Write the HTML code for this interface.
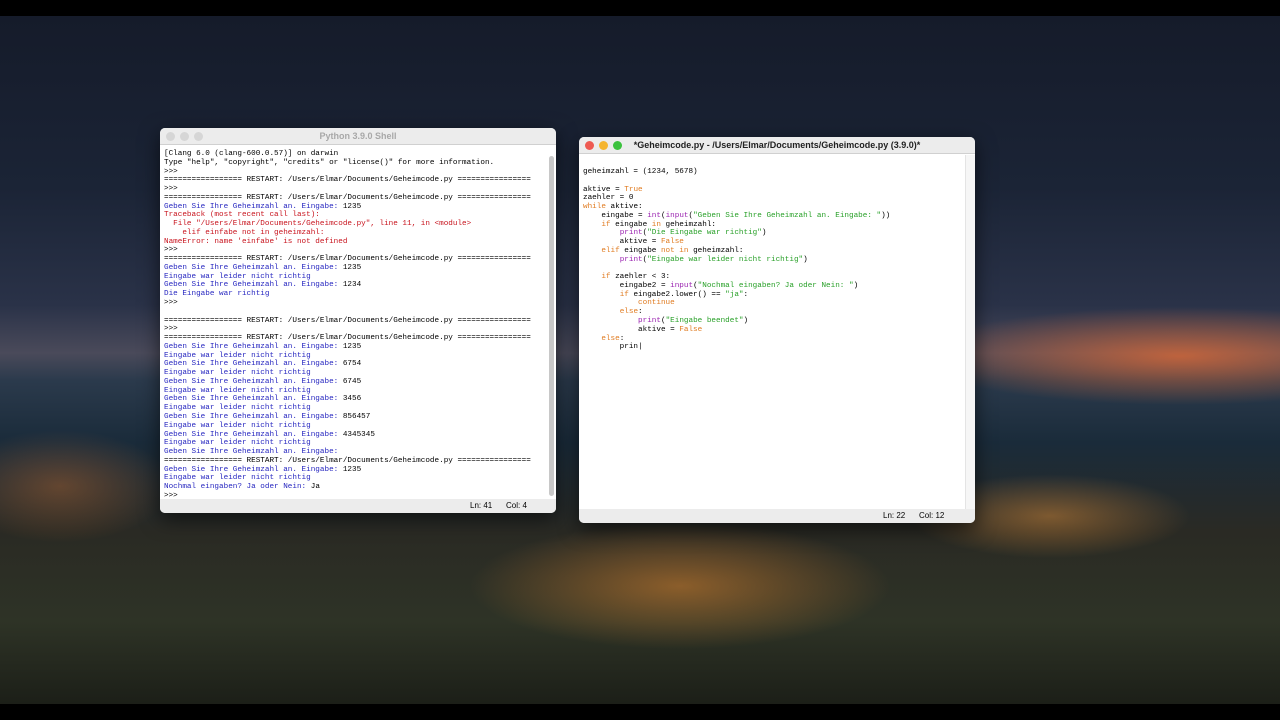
<!DOCTYPE html>
<html><head><meta charset="utf-8"><style>
*{margin:0;padding:0;box-sizing:border-box}
body{width:1280px;height:720px;overflow:hidden;position:relative;background:#000;font-family:"Liberation Sans",sans-serif}
.bg{position:absolute;left:0;top:16px;width:1280px;height:688px;
background:
radial-gradient(ellipse 380px 70px at 1180px 340px,rgba(240,110,50,.7),transparent 70%),
radial-gradient(ellipse 300px 90px at 680px 570px,rgba(255,150,50,.45),transparent 70%),
radial-gradient(ellipse 200px 60px at 1050px 500px,rgba(255,160,60,.4),transparent 70%),
radial-gradient(ellipse 160px 80px at 60px 470px,rgba(220,120,50,.35),transparent 70%),
linear-gradient(180deg,#151b2a 0%,#1b2436 25%,#2a3248 42%,#4a4a5a 49%,#2b3a4c 53%,#1a2b3a 62%,#2a2a24 75%,#2e3326 88%,#1c1f18 100%)}
.win{position:absolute;background:#fff;border-radius:5px;overflow:hidden;box-shadow:0 6px 20px rgba(0,0,0,.6)}
.tb{height:17px;background:#ececec;border-bottom:1px solid #d0d0d0;position:relative;font-size:9px;font-weight:bold;text-align:center;line-height:17px}
.dot{position:absolute;top:4px;width:9px;height:9px;border-radius:50%}
pre{font-family:"Liberation Mono",monospace;font-size:7.65px;line-height:8.77px;position:absolute;white-space:pre}
.b{color:#2727c0}.r{color:#c8141e}.o{color:#e07b20}.p{color:#9a22b0}.g{color:#28a028}
.sb{position:absolute;left:0;right:0;bottom:0;height:14px;background:#ececec;font-size:8px;line-height:14px}
</style></head><body>
<div class="bg"></div>
<div class="win" style="left:160px;top:128px;width:396px;height:385px">
<div class="tb" style="color:#a8a8a8"><span class="dot" style="left:6px;background:#d6d6d6"></span><span class="dot" style="left:20px;background:#d6d6d6"></span><span class="dot" style="left:34px;background:#d6d6d6"></span>Python 3.9.0 Shell</div>
<pre style="left:4px;top:22px">[Clang 6.0 (clang-600.0.57)] on darwin
Type "help", "copyright", "credits" or "license()" for more information.
&gt;&gt;&gt;
================= RESTART: /Users/Elmar/Documents/Geheimcode.py ================
&gt;&gt;&gt;
================= RESTART: /Users/Elmar/Documents/Geheimcode.py ================
<span class="b">Geben Sie Ihre Geheimzahl an. Eingabe: </span>1235
<span class="r">Traceback (most recent call last):
  File "/Users/Elmar/Documents/Geheimcode.py", line 11, in &lt;module&gt;
    elif einfabe not in geheimzahl:
NameError: name 'einfabe' is not defined</span>
&gt;&gt;&gt;
================= RESTART: /Users/Elmar/Documents/Geheimcode.py ================
<span class="b">Geben Sie Ihre Geheimzahl an. Eingabe: </span>1235
<span class="b">Eingabe war leider nicht richtig</span>
<span class="b">Geben Sie Ihre Geheimzahl an. Eingabe: </span>1234
<span class="b">Die Eingabe war richtig</span>
&gt;&gt;&gt;

================= RESTART: /Users/Elmar/Documents/Geheimcode.py ================
&gt;&gt;&gt;
================= RESTART: /Users/Elmar/Documents/Geheimcode.py ================
<span class="b">Geben Sie Ihre Geheimzahl an. Eingabe: </span>1235
<span class="b">Eingabe war leider nicht richtig</span>
<span class="b">Geben Sie Ihre Geheimzahl an. Eingabe: </span>6754
<span class="b">Eingabe war leider nicht richtig</span>
<span class="b">Geben Sie Ihre Geheimzahl an. Eingabe: </span>6745
<span class="b">Eingabe war leider nicht richtig</span>
<span class="b">Geben Sie Ihre Geheimzahl an. Eingabe: </span>3456
<span class="b">Eingabe war leider nicht richtig</span>
<span class="b">Geben Sie Ihre Geheimzahl an. Eingabe: </span>856457
<span class="b">Eingabe war leider nicht richtig</span>
<span class="b">Geben Sie Ihre Geheimzahl an. Eingabe: </span>4345345
<span class="b">Eingabe war leider nicht richtig</span>
<span class="b">Geben Sie Ihre Geheimzahl an. Eingabe: </span>
================= RESTART: /Users/Elmar/Documents/Geheimcode.py ================
<span class="b">Geben Sie Ihre Geheimzahl an. Eingabe: </span>1235
<span class="b">Eingabe war leider nicht richtig</span>
<span class="b">Nochmal eingaben? Ja oder Nein: </span>Ja
&gt;&gt;&gt;</pre>
<div style="position:absolute;right:2px;top:28px;width:5px;height:340px;background:#c8c8c8;border-radius:3px"></div>
<div class="sb"><span style="position:absolute;left:310px">Ln: 41</span><span style="position:absolute;left:346px">Col: 4</span></div>
</div>
<div class="win" style="left:579px;top:137px;width:396px;height:386px">
<div class="tb" style="color:#222"><span class="dot" style="left:6px;background:#ee5a52"></span><span class="dot" style="left:20px;background:#f5b530"></span><span class="dot" style="left:34px;background:#3cc23e"></span>*Geheimcode.py - /Users/Elmar/Documents/Geheimcode.py (3.9.0)*</div>
<pre style="left:4px;top:31px">geheimzahl = (1234, 5678)

aktive = <span class="o">True</span>
zaehler = 0
<span class="o">while</span> aktive:
    eingabe = <span class="p">int</span>(<span class="p">input</span>(<span class="g">"Geben Sie Ihre Geheimzahl an. Eingabe: "</span>))
    <span class="o">if</span> eingabe <span class="o">in</span> geheimzahl:
        <span class="p">print</span>(<span class="g">"Die Eingabe war richtig"</span>)
        aktive = <span class="o">False</span>
    <span class="o">elif</span> eingabe <span class="o">not in</span> geheimzahl:
        <span class="p">print</span>(<span class="g">"Eingabe war leider nicht richtig"</span>)

    <span class="o">if</span> zaehler &lt; 3:
        eingabe2 = <span class="p">input</span>(<span class="g">"Nochmal eingaben? Ja oder Nein: "</span>)
        <span class="o">if</span> eingabe2.lower() == <span class="g">"ja"</span>:
            <span class="o">continue</span>
        <span class="o">else</span>:
            <span class="p">print</span>(<span class="g">"Eingabe beendet"</span>)
            aktive = <span class="o">False</span>
    <span class="o">else</span>:
        prin|</pre>
<div style="position:absolute;right:0;top:18px;width:10px;bottom:14px;background:#f6f6f6;border-left:1px solid #e4e4e4"></div>
<div class="sb"><span style="position:absolute;left:304px">Ln: 22</span><span style="position:absolute;left:340px">Col: 12</span></div>
</div>
</body></html>
